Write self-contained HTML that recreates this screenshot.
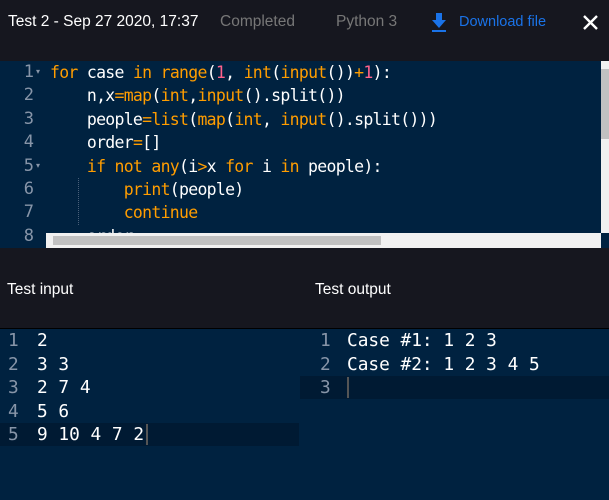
<!DOCTYPE html>
<html><head><style>
body{margin:0;width:609px;height:500px;background:#16171f;overflow:hidden;font-family:"Liberation Sans",sans-serif;position:relative}
.h{position:absolute;top:13px;font-size:15.5px;color:#fff}
.code{position:absolute;left:0;top:61px;width:609px;height:187px;background:#002240;overflow:hidden}
.cl{position:absolute;left:50px;white-space:pre;color:#fff;font:16.5px "DejaVu Sans Mono",monospace;letter-spacing:-0.72px;line-height:23.4px}
.k{color:#ff9d00}.n{color:#ff628c}
.pl{position:absolute;white-space:pre;color:#fff;font:17.8px "DejaVu Sans Mono",monospace;line-height:23.5px}
.g{color:#8795a8}
</style></head><body>
<div class="h" style="left:8px">Test 2 - Sep 27 2020, 17:37</div>
<div class="h" style="left:220px;color:#777">Completed</div>
<div class="h" style="left:336px;color:#777">Python 3</div>
<svg style="position:absolute;left:431px;top:13px" width="16" height="20" viewBox="0 0 16 20"><path d="M5 0h6v7h4l-7 8-7-8h4z" fill="#1a73e8"/><rect x="1" y="17" width="14" height="2" fill="#1a73e8"/></svg>
<div class="h" style="left:459px;color:#1a73e8;font-size:14.5px;top:14px">Download file</div>
<svg style="position:absolute;left:583px;top:15px" width="15" height="15"><path d="M1 1L14 14M14 1L1 14" stroke="#fff" stroke-width="2.4"/></svg>
<div class="code">
<div class="cl" style="top:0;left:50px"><span class="k">for</span> case <span class="k">in</span> <span class="k">range</span>(<span class="n">1</span>, <span class="k">int</span>(<span class="k">input</span>())<span class="k">+</span><span class="n">1</span>):
    n,x<span class="k">=map</span>(<span class="k">int</span>,<span class="k">input</span>().split())
    people<span class="k">=list</span>(<span class="k">map</span>(<span class="k">int</span>, <span class="k">input</span>().split()))
    order<span class="k">=</span>[]
    <span class="k">if not any</span>(i<span class="k">&gt;</span>x <span class="k">for</span> i <span class="k">in</span> people):
        <span class="k">print</span>(people)
        <span class="k">continue</span>
    order.</div>
<div class="cl" style="left:0;width:34px;text-align:right;color:#8795a8;font-size:17px;letter-spacing:0">1
2
3
4
5
6
7
8</div>
<div style="position:absolute;left:36px;top:6px;color:#8795a8;font-size:8px">▾</div>
<div style="position:absolute;left:36px;top:100px;color:#8795a8;font-size:8px">▾</div>
<div style="position:absolute;left:78px;top:117px;width:0;height:47px;border-left:1px dotted #4a607a"></div>
<div style="position:absolute;left:46px;top:172px;width:555px;height:15px;background:#f1f1f1"></div>
<div style="position:absolute;left:53px;top:175px;width:328px;height:9px;background:#c1c1c1"></div>
<div style="position:absolute;left:601px;top:0;width:8px;height:172px;background:#f1f1f1"></div>
<div style="position:absolute;left:601px;top:8px;width:8px;height:70px;background:#c1c1c1"></div>
</div>
<div class="h" style="left:7px;top:281px">Test input</div>
<div class="h" style="left:315px;top:281px">Test output</div>
<div style="position:absolute;left:0;top:328px;width:609px;height:1px;background:#000"></div>
<div style="position:absolute;left:0;top:329px;width:300px;height:171px;background:#002240"></div>
<div style="position:absolute;left:300px;top:329px;width:309px;height:171px;background:#002240"></div>
<div style="position:absolute;left:0;top:423px;width:299px;height:23px;background:#001a33"></div>
<div style="position:absolute;left:300px;top:376px;width:309px;height:23px;background:#001a33"></div>
<div style="position:absolute;left:146px;top:424px;width:2px;height:21px;background:#555"></div>
<div style="position:absolute;left:347px;top:377px;width:2px;height:21px;background:#555"></div>
<div class="pl g" style="left:8px;top:329px">1
2
3
4
5</div>
<div class="pl" style="left:37px;top:329px">2
3 3
2 7 4
5 6
9 10 4 7 2</div>
<div class="pl g" style="left:320px;top:329px">1
2
3</div>
<div class="pl" style="left:347px;top:329px">Case #1: 1 2 3
Case #2: 1 2 3 4 5</div>
</body></html>
